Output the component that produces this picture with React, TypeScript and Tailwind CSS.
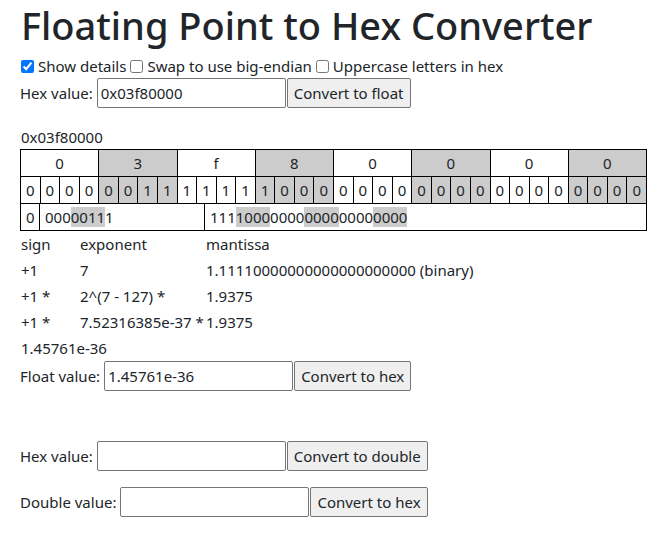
import React from "react";

const hex = ["0", "3", "f", "8", "0", "0", "0", "0"];
const bits = "00000011111110000000000000000000".split("");

function Hl({ text, ranges }: { text: string; ranges: [number, number][] }) {
  const parts: React.ReactNode[] = [];
  let i = 0;
  ranges.forEach(([a, b], k) => {
    if (a > i) parts.push(<span key={"p" + k}>{text.slice(i, a)}</span>);
    parts.push(
      <span key={"h" + k} className="bg-[#cccccc]">
        {text.slice(a, b)}
      </span>
    );
    i = b;
  });
  if (i < text.length) parts.push(<span key="end">{text.slice(i)}</span>);
  return <>{parts}</>;
}

export default function App() {
  const inputCls =
    "h-[30px] border border-[#767676] rounded-[2px] px-[3px] text-[15px] text-[#212529] bg-white outline-none";
  const btnCls =
    "h-[30px] border border-[#767676] rounded-[2px] bg-[#efefef] px-[6px] text-[15px] text-[#212529]";
  return (
    <div
      className="flex flex-col items-start px-[20px] text-[15px] leading-[24px] text-[#212529] bg-white min-h-[533px]"
      style={{ fontFamily: '"Noto Sans", "Open Sans", sans-serif' }}
    >
      <h1 className="text-[38px] font-medium leading-[50px] mb-[4px] pl-[1px] whitespace-nowrap">
        Floating Point to Hex Converter
      </h1>
      <div className="flex items-center h-[24px]">
        <input type="checkbox" defaultChecked className="w-[13px] h-[13px] ml-[1px] mr-[4px] accent-[#0075ff]" />
        <span>Show details</span>
        <input type="checkbox" className="w-[13px] h-[13px] ml-[4px] mr-[4px]" />
        <span>Swap to use big-endian</span>
        <input type="checkbox" className="w-[13px] h-[13px] ml-[4px] mr-[4px]" />
        <span>Uppercase letters in hex</span>
      </div>
      <div className="flex items-center">
        <span className="mr-[4px]">Hex value:</span>
        <input className={inputCls + " w-[189px]"} defaultValue="0x03f80000" />
        <button className={btnCls + " ml-[1px]"}>Convert to float</button>
      </div>
      <div className="mt-[17px] h-[24px] pl-[1px]">0x03f80000</div>
      <div className="w-[627px] border-l border-t border-black">
        <div className="grid grid-cols-8">
          {hex.map((h, i) => (
            <div
              key={i}
              className={
                "h-[27px] border-r border-b border-black flex items-center justify-center " +
                (i % 2 === 1 ? "bg-[#cccccc]" : "bg-white")
              }
            >
              {h}
            </div>
          ))}
        </div>
        <div className="grid grid-cols-[repeat(32,minmax(0,1fr))]">
          {bits.map((b, i) => (
            <div
              key={i}
              className={
                "h-[27px] border-r border-b border-black flex items-center justify-center " +
                (Math.floor(i / 4) % 2 === 1 ? "bg-[#cccccc]" : "bg-white")
              }
            >
              {b}
            </div>
          ))}
        </div>
        <div className="flex h-[27px]">
          <div className="w-[19px] border-r border-b border-black flex items-center pl-[5px]">0</div>
          <div className="w-[165px] border-r border-b border-black flex items-center pl-[5px]">
            <span>
              <Hl text="00000111" ranges={[[3, 7]]} />
            </span>
          </div>
          <div className="flex-1 border-r border-b border-black flex items-center pl-[5px]">
            <span>
              <Hl
                text="11110000000000000000000"
                ranges={[
                  [3, 7],
                  [11, 15],
                  [19, 23],
                ]}
              />
            </span>
          </div>
        </div>
      </div>
      <div className="grid grid-cols-[59px_126px_auto] leading-[26px] pl-[1px]">
        <div>sign</div>
        <div>exponent</div>
        <div>mantissa</div>
        <div>+1</div>
        <div>7</div>
        <div>1.11110000000000000000000 (binary)</div>
        <div>+1 *</div>
        <div>2^(7 - 127) *</div>
        <div>1.9375</div>
        <div>+1 *</div>
        <div className="whitespace-nowrap">7.52316385e-37 *</div>
        <div>1.9375</div>
      </div>
      <div className="leading-[26px] pl-[1px]">1.45761e-36</div>
      <div className="flex items-center">
        <span className="mr-[4px]">Float value:</span>
        <input className={inputCls + " w-[189px]"} defaultValue="1.45761e-36" />
        <button className={btnCls + " ml-[1px]"}>Convert to hex</button>
      </div>
      <div className="flex items-center mt-[50px]">
        <span className="mr-[4px]">Hex value:</span>
        <input className={inputCls + " w-[189px]"} />
        <button className={btnCls + " ml-[1px]"}>Convert to double</button>
      </div>
      <div className="flex items-center mt-[16px]">
        <span className="mr-[4px]">Double value:</span>
        <input className={inputCls + " w-[189px]"} />
        <button className={btnCls + " ml-[1px]"}>Convert to hex</button>
      </div>
    </div>
  );
}
